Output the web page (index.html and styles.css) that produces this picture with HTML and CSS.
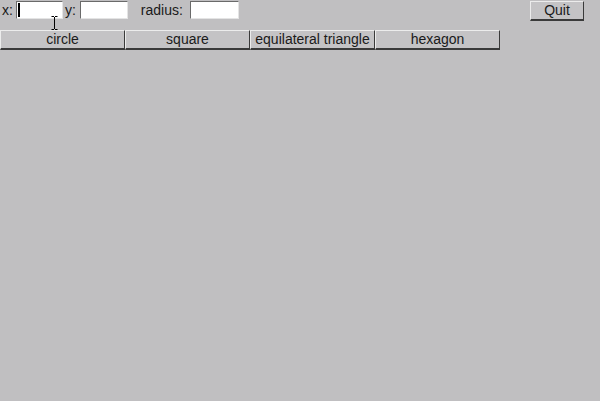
FILE: index.html
```html
<!DOCTYPE html>
<html>
<head>
<meta charset="utf-8">
<link rel="stylesheet" href="styles.css">
</head>
<body>
<div class="app">
  <div class="toolbar">
    <span class="lbl lbl-x">x:</span>
    <div class="entry entry-x"><span class="caret"></span></div>
    <span class="lbl lbl-y">y:</span>
    <div class="entry entry-y"></div>
    <span class="lbl lbl-r">radius:</span>
    <div class="entry entry-r"></div>
    <div class="spacer"></div>
    <div class="btn quit">Quit</div>
  </div>
  <div class="shapes">
    <div class="btn shape">circle</div>
    <div class="btn shape">square</div>
    <div class="btn shape">equilateral triangle</div>
    <div class="btn shape">hexagon</div>
  </div>
  <svg class="ibeam" width="7" height="14" viewBox="0 0 7 14">
    <path d="M0.5 0.5h2.5M4 0.5h2.5M3.5 1v12M0.5 13.5h2.5M4 13.5h2.5" stroke="#000" stroke-width="1" fill="none"/>
  </svg>
</div>
</body>
</html>
```

FILE: styles.css
```css
html, body {
  margin: 0;
  padding: 0;
  background: #c0bfc1;
}
.app {
  position: relative;
  width: 600px;
  height: 401px;
  font-family: "Liberation Sans", Arial, sans-serif;
  font-size: 14px;
  color: #1a1a1a;
}
.toolbar {
  display: flex;
  align-items: flex-start;
  height: 21px;
  padding-top: 1px;
}
.lbl {
  line-height: 20px;
  margin-top: -1px;
}
.lbl-x { margin-left: 2px; }
.lbl-y { margin-left: 2px; }
.lbl-r { margin-left: 13px; }
.entry {
  box-sizing: border-box;
  height: 18px;
  background: #ffffff;
  border-top: 1px solid #6a6a6a;
  border-left: 1px solid #6a6a6a;
  border-right: 1px solid #e4e4e4;
  border-bottom: 1px solid #e4e4e4;
  position: relative;
}
.entry-x { width: 47px; margin-left: 3px; }
.entry-y { width: 48px; margin-left: 4px; }
.entry-r { width: 49px; margin-left: 7px; }
.caret {
  position: absolute;
  left: 1px;
  top: 1px;
  width: 2px;
  height: 14px;
  background: #000;
}
.spacer { flex: 1; }
.btn {
  box-sizing: border-box;
  background: #c4c3c5;
  border-top: 1px solid #ececec;
  border-left: 1px solid #ececec;
  border-right: 1px solid #3a3a3a;
  border-bottom: 2px solid #3a3a3a;
  text-align: center;
  line-height: 17px;
  height: 20px;
}
.quit {
  width: 54px;
  margin-right: 16px;
}
.shapes {
  display: flex;
  margin-top: 8px;
}
.shape {
  width: 125px;
}
.ibeam {
  position: absolute;
  left: 51px;
  top: 16px;
}
```
